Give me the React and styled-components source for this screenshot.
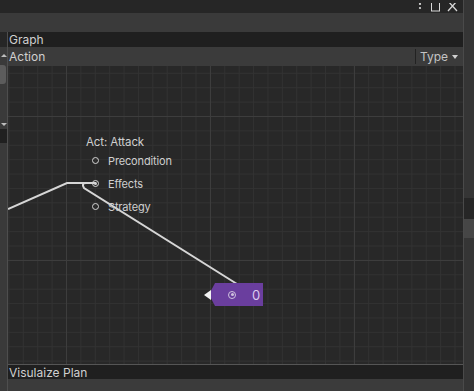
import React from 'react';
import styled, { createGlobalStyle, css } from 'styled-components';

const GlobalStyle = createGlobalStyle`
  html, body {
    margin: 0;
    padding: 0;
    background: #282828;
  }
  body {
    font-family: Inter, "Noto Sans", sans-serif;
    color: #d2d2d2;
  }
`;

const Root = styled.div`
  width: 474px;
  height: 391px;
  display: grid;
  grid-template-columns: 1fr 10px;
  overflow: hidden;
`;

const Window = styled.div`
  display: flex;
  flex-direction: column;
  border-right: 1px solid #4a4a4a;
  min-width: 0;
`;

const TitleBar = styled.div`
  height: 13px;
  flex: none;
  background: #262626;
  display: flex;
  justify-content: flex-end;
  align-items: flex-end;
  padding-right: 2px;
`;

const ToolBand = styled.div`
  height: 19px;
  flex: none;
  background: #3a3a3a;
`;

const Body = styled.div`
  flex: 1;
  display: grid;
  grid-template-columns: 8px 1fr;
  min-height: 0;
`;

const SideStrip = styled.div`
  display: flex;
  flex-direction: column;
  border-right: 1px solid #4e4e4e;
  background: #3a3a3a;
`;

const SideBlock = styled.div`
  height: ${(p) => p.h}px;
  flex: none;
  background: ${(p) => p.bg || 'transparent'};
  display: flex;
  align-items: center;
  justify-content: center;
`;

const Thumb = styled.div`
  width: 7px;
  height: 19px;
  margin-right: 1px;
  border-radius: 0 3px 3px 0;
  background: #5c5c5c;
`;

const Arrow = styled.div`
  width: 0;
  height: 0;
  border-left: 3px solid transparent;
  border-right: 3px solid transparent;
  ${(p) =>
    p.up
      ? css`border-bottom: 3px solid #bdbdbd;`
      : css`border-top: 3px solid #bdbdbd;`}
`;

const Center = styled.div`
  display: flex;
  flex-direction: column;
  min-width: 0;
`;

const HeaderBar = styled.div`
  height: ${(p) => p.h}px;
  flex: none;
  background: ${(p) => (p.dark ? '#1f1f1f' : '#3b3b3b')};
  display: flex;
  align-items: center;
  padding-left: 1px;
  font-size: 12px;
  color: #d0d0d0;
`;

const Spacer = styled.div`
  flex: 1;
`;

const TypeMenu = styled.div`
  display: flex;
  align-items: center;
  gap: 4px;
  height: 15px;
  padding: 0 5px 0 4px;
  border-left: 1px solid #222;
  color: #c4c4c4;
`;

const Caret = styled.div`
  width: 0;
  height: 0;
  border-left: 3.5px solid transparent;
  border-right: 3.5px solid transparent;
  border-top: 4px solid #d0d0d0;
`;

const Canvas = styled.div`
  position: relative;
  flex: 1;
  background-color: #282828;
  background-image:
    linear-gradient(to right, #3d3d3d 1px, transparent 1px),
    linear-gradient(to bottom, #3d3d3d 1px, transparent 1px),
    linear-gradient(to right, #323232 1px, transparent 1px),
    linear-gradient(to bottom, #323232 1px, transparent 1px);
  background-size: 144px 100%, 100% 144px, 14.4px 100%, 100% 14.4px;
  background-position: 58px 0, 0 50px, 58px 0, 0 50px;
  border-bottom: 1px solid #555;
  overflow: hidden;
`;

const Edges = styled.svg`
  position: absolute;
  inset: 0;
  width: 100%;
  height: 100%;
`;

const ActionNode = styled.div`
  position: absolute;
  left: 80px;
  top: 69px;
  display: flex;
  flex-direction: column;
  font-size: 11px;
  letter-spacing: -0.15px;
  color: #cfcfcf;
`;

const NodeTitle = styled.div`
  height: 14px;
  line-height: 14px;
  margin-left: -2px;
  font-size: 11.5px;
  letter-spacing: -0.1px;
`;

const PortRow = styled.div`
  height: 23px;
  display: flex;
  align-items: center;
  gap: 9px;
  padding-left: 4px;
`;

const Port = styled.div`
  width: 7px;
  height: 7px;
  box-sizing: border-box;
  border: 1.5px solid #d4d4d4;
  border-radius: 50%;
  display: flex;
  align-items: center;
  justify-content: center;
  &::after {
    content: '';
    width: 3px;
    height: 3px;
    border-radius: 50%;
    background: ${(p) => (p.connected ? '#d4d4d4' : 'transparent')};
  }
`;

const PlanNode = styled.div`
  position: absolute;
  left: 196px;
  top: 217px;
  display: flex;
  align-items: center;
`;

const Tip = styled.div`
  width: 0;
  height: 0;
  border-top: 5px solid transparent;
  border-bottom: 5px solid transparent;
  border-right: 7px solid #f2f2f2;
  margin-right: -2px;
  position: relative;
  z-index: 1;
`;

const PlanBody = styled.div`
  width: 54px;
  height: 23px;
  background: #6a3e9e;
  clip-path: polygon(6px 0, 100% 0, 100% 100%, 6px 100%, 0 50%);
  display: flex;
  align-items: center;
  padding-left: 19px;
  box-sizing: border-box;
  gap: 16px;
  font-size: 13px;
  color: #dccbf0;
`;

const PlanPort = styled(Port)`
  width: 8px;
  height: 8px;
  border-color: #cfc2de;
  &::after {
    background: #cfc2de;
  }
`;

const RightStrip = styled.div`
  background: #353535;
  display: flex;
  flex-direction: column;
`;

const StripBlock = styled.div`
  height: ${(p) => p.h}px;
  flex: none;
  background: ${(p) => p.bg || 'transparent'};
`;

const ports = [
  { name: 'Precondition' },
  { name: 'Effects', connected: true },
  { name: 'Strategy' },
];

const WindowIcons = () => (
  <svg width="44" height="10" viewBox="0 0 44 10">
    <circle cx="3" cy="1" r="1.1" fill="#d8d8d8" />
    <circle cx="3" cy="5" r="1.1" fill="#d8d8d8" />
    <rect x="14.5" y="-2" width="8" height="10" fill="none" stroke="#d8d8d8" strokeWidth="1" />
    <path d="M31 -2 L40 8 M40 -2 L31 8" stroke="#d8d8d8" strokeWidth="1.3" />
  </svg>
);

export default function App() {
  return (
    <Root>
      <GlobalStyle />
      <Window>
        <TitleBar>
          <WindowIcons />
        </TitleBar>
        <ToolBand />
        <Body>
          <SideStrip>
            <SideBlock h={15} bg="#262626" />
            <SideBlock h={16}>
              <Arrow up />
            </SideBlock>
            <SideBlock h={22}>
              <Thumb />
            </SideBlock>
            <SideBlock h={34} />
            <SideBlock h={10}>
              <Arrow />
            </SideBlock>
            <SideBlock h={14} bg="#202020" />
          </SideStrip>
          <Center>
            <HeaderBar h={15} dark>Graph</HeaderBar>
            <HeaderBar h={19}>
              Action
              <Spacer />
              <TypeMenu>
                Type
                <Caret />
              </TypeMenu>
            </HeaderBar>
            <Canvas>
              <Edges>
                <path
                  d="M0 143 L59 117 L88 117"
                  fill="none"
                  stroke="#d6d6d6"
                  strokeWidth="2"
                />
                <path
                  d="M88 117 L78 117 Q73 117 76 122 L229 218"
                  fill="none"
                  stroke="#d6d6d6"
                  strokeWidth="2"
                />
              </Edges>
              <ActionNode>
                <NodeTitle>Act: Attack</NodeTitle>
                {ports.map((p) => (
                  <PortRow key={p.name}>
                    <Port connected={p.connected} />
                    {p.name}
                  </PortRow>
                ))}
              </ActionNode>
              <PlanNode>
                <Tip />
                <PlanBody>
                  <PlanPort />
                  0
                </PlanBody>
              </PlanNode>
            </Canvas>
            <HeaderBar h={14} dark>Visulaize Plan</HeaderBar>
            <HeaderBar h={12} />
          </Center>
        </Body>
      </Window>
      <RightStrip>
        <StripBlock h={198} />
        <StripBlock h={21} bg="#262626" />
        <StripBlock h={19} bg="#464646" />
      </RightStrip>
    </Root>
  );
}
